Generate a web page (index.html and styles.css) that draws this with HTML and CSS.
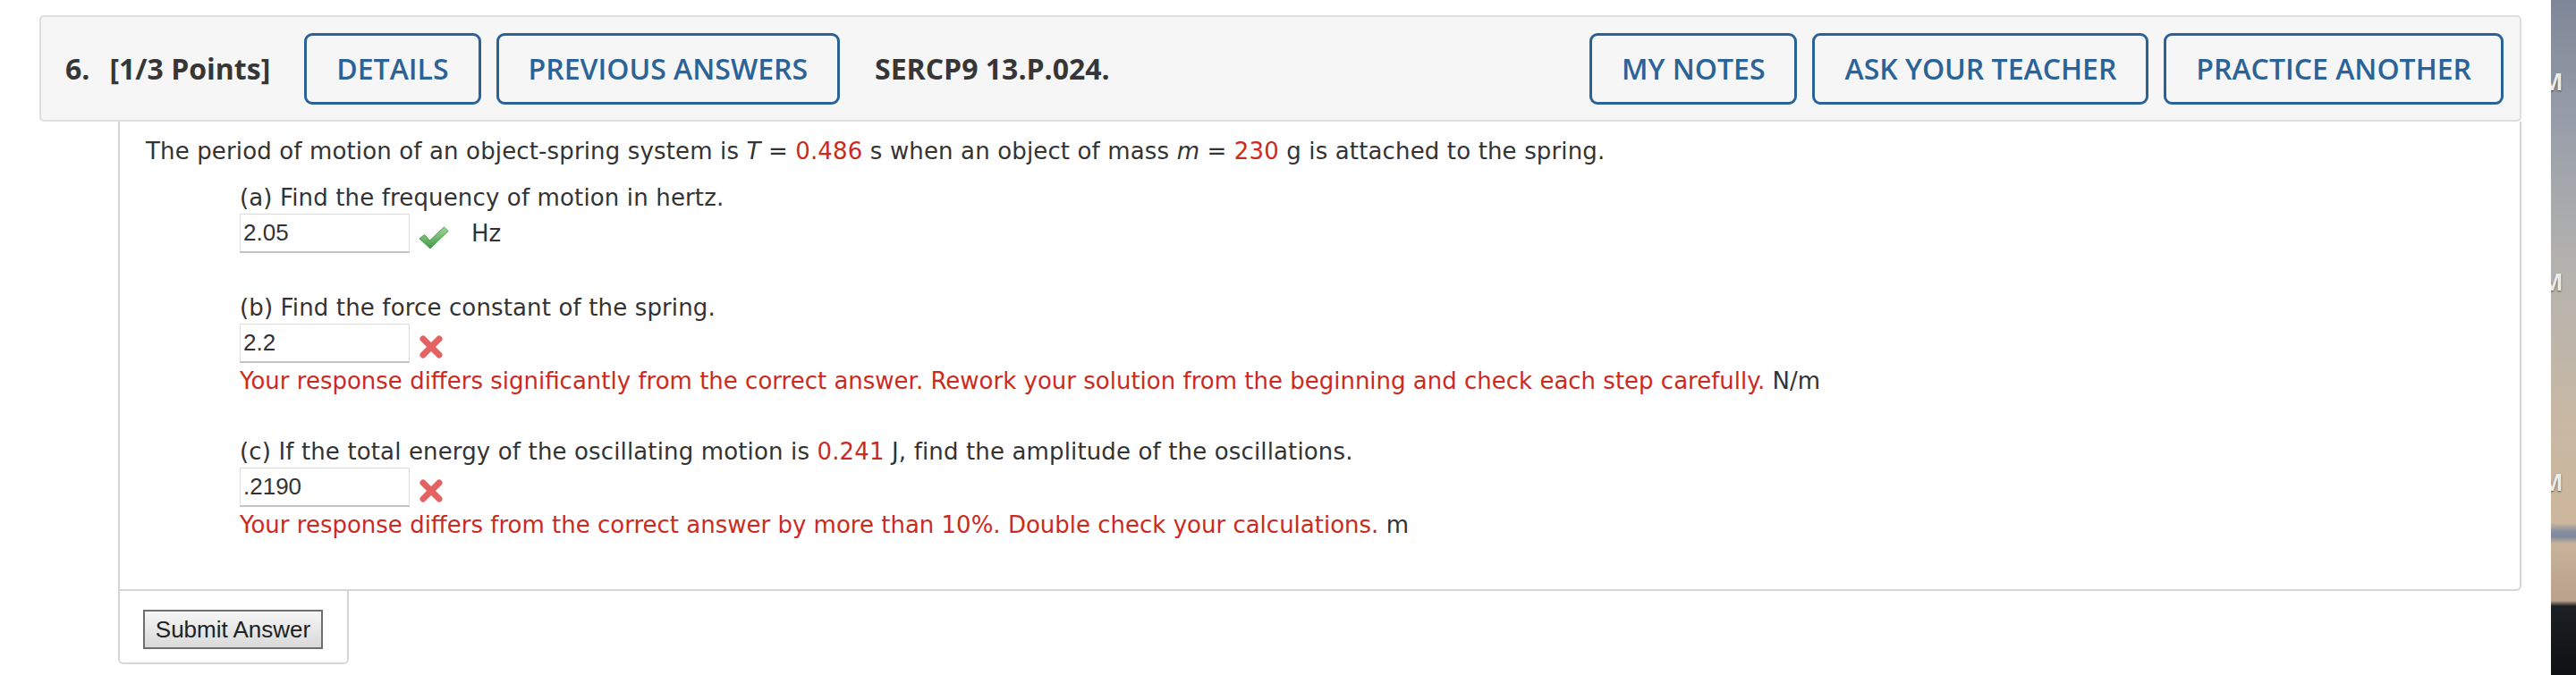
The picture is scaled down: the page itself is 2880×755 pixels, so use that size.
FILE: index.html
```html
<!DOCTYPE html>
<html lang="en">
<head>
<meta charset="utf-8">
<title>Question 6</title>
<link rel="stylesheet" href="styles.css">
</head>
<body>
<div class="page">
  <main class="question">
    <div class="qhead">
      <span class="qnum">6.</span>
      <span class="qpoints">[1/3 Points]</span>
      <button class="hbtn">DETAILS</button>
      <button class="hbtn hbtn-last">PREVIOUS ANSWERS</button>
      <span class="qcode">SERCP9 13.P.024.</span>
      <span class="spacer"></span>
      <button class="hbtn">MY NOTES</button>
      <button class="hbtn">ASK YOUR TEACHER</button>
      <button class="hbtn">PRACTICE ANOTHER</button>
    </div>
    <div class="qbody">
      <p class="stem">The period of motion of an object-spring system is <i>T</i> = <span class="red">0.486</span> s when an object of mass <i>m</i> = <span class="red">230</span> g is attached to the spring.</p>
      <div class="parts">
        <div class="part">
          <div class="prompt">(a) Find the frequency of motion in hertz.</div>
          <div class="answer">
            <input class="ans" type="text" value="2.05" readonly>
            <svg class="icon icon-check" width="36" height="28" viewBox="0 0 36 28" aria-hidden="true">
              <defs>
                <linearGradient id="gck" x1="0" y1="0" x2="0" y2="1">
                  <stop offset="0" stop-color="#9fd89a"/>
                  <stop offset="1" stop-color="#3f9a43"/>
                </linearGradient>
              </defs>
              <path d="M2 15 L7.5 10.5 L13.5 17 L29.5 2 L34 6.5 L14 26 Z" fill="url(#gck)" stroke="#4a9b4a" stroke-width="1" stroke-linejoin="round"/>
            </svg>
            <span class="unit">Hz</span>
          </div>
        </div>
        <div class="part">
          <div class="prompt">(b) Find the force constant of the spring.</div>
          <div class="answer">
            <input class="ans" type="text" value="2.2" readonly>
            <svg class="icon icon-x" width="30" height="26" viewBox="0 0 30 26" aria-hidden="true">
              <path d="M6 4 L24 22 M24 4 L6 22" stroke="#e46262" stroke-width="7" stroke-linecap="round"/>
            </svg>
          </div>
          <div class="feedback"><span class="red">Your response differs significantly from the correct answer. Rework your solution from the beginning and check each step carefully.</span> N/m</div>
        </div>
        <div class="part">
          <div class="prompt">(c) If the total energy of the oscillating motion is <span class="red">0.241</span> J, find the amplitude of the oscillations.</div>
          <div class="answer">
            <input class="ans" type="text" value=".2190" readonly>
            <svg class="icon icon-x" width="30" height="26" viewBox="0 0 30 26" aria-hidden="true">
              <path d="M6 4 L24 22 M24 4 L6 22" stroke="#e46262" stroke-width="7" stroke-linecap="round"/>
            </svg>
          </div>
          <div class="feedback"><span class="red">Your response differs from the correct answer by more than 10%. Double check your calculations.</span> m</div>
        </div>
      </div>
    </div>
    <div class="submit-box">
      <button class="submit">Submit Answer</button>
    </div>
  </main>
  <aside class="wallpaper">
    <span class="wp-label">M</span>
    <span class="wp-label">M</span>
    <span class="wp-label">M</span>
  </aside>
</div>
</body>
</html>
```

FILE: styles.css
```css
* {
  box-sizing: border-box;
}

html,
body {
  margin: 0;
  padding: 0;
  background: #ffffff;
}

body {
  font-family: "DejaVu Sans", Verdana, sans-serif;
  color: #333333;
}

.page {
  display: flex;
  height: 755px;
  overflow: hidden;
}

.question {
  flex: 1;
  margin: 17px 33px 0 44px;
}

/* Header bar */
.qhead {
  display: flex;
  align-items: center;
  height: 119px;
  padding: 0 18px 0 27px;
  background: #f6f6f6;
  border: 2px solid #dedede;
  border-radius: 5px;
  font-family: "Open Sans", sans-serif;
  font-size: 32px;
  font-weight: 700;
  color: #363636;
}

.qnum {
  margin-right: 22px;
}

.qpoints {
  margin-right: 38px;
}

.spacer {
  flex: 1;
}

.hbtn {
  display: inline-flex;
  align-items: center;
  height: 80px;
  padding: 0 33px;
  background: transparent;
  border: 3px solid #2c6397;
  border-radius: 9px;
  color: #2c6397;
  font-family: "Open Sans", sans-serif;
  font-size: 32px;
  font-weight: 600;
  cursor: pointer;
}

.hbtn + .hbtn {
  margin-left: 17px;
}

.hbtn-last {
  margin-right: 39px;
}

/* Question body */
.qbody {
  margin-left: 88px;
  border: 2px solid #d6d6d6;
  border-top: 0;
  border-bottom-right-radius: 6px;
  padding: 15px 0 54px 29px;
  font-size: 26px;
  line-height: 36px;
}

.stem {
  margin: 0;
  letter-spacing: 0.14px;
}

.prompt {
  letter-spacing: 0.14px;
}

.red {
  color: #cc2a1e;
}

.parts {
  margin: 16px 0 0 105px;
}

.part + .part {
  margin-top: 43px;
}

.answer {
  display: flex;
  align-items: center;
  height: 44px;
}

.ans {
  width: 190px;
  height: 44px;
  margin: 0;
  padding: 0 3px;
  border: 1px solid #dcdcdc;
  border-bottom: 2px solid #c2c2c2;
  background: #ffffff;
  font-family: "Liberation Sans", Arial, sans-serif;
  font-size: 26px;
  color: #333333;
  outline: none;
}

.icon {
  display: block;
  margin-left: 9px;
  margin-top: 10px;
}

.icon-x {
  margin-top: 8px;
}

.unit {
  margin-left: 24px;
}

.feedback {
  margin-top: 2px;
}

/* Submit */
.submit-box {
  width: 258px;
  height: 82px;
  margin-left: 88px;
  padding: 21px 0 0 26px;
  border: 2px solid #d6d6d6;
  border-top: 0;
  border-radius: 0 0 6px 6px;
}

.submit {
  width: 201px;
  height: 44px;
  padding: 0;
  border: 2px solid #6e6e6e;
  background: linear-gradient(#f6f6f6, #d9d9d9);
  font-family: "Liberation Sans", Arial, sans-serif;
  font-size: 26px;
  color: #222222;
}

/* Desktop wallpaper strip at the right edge */
.wallpaper {
  width: 28px;
  flex: none;
  display: flex;
  flex-direction: column;
  gap: 200px;
  padding-top: 79px;
  overflow: hidden;
  background: linear-gradient(180deg,
    #7e8797 0px,
    #9aa0aa 150px,
    #b4b2ae 300px,
    #c6b8a5 450px,
    #cdb69c 585px,
    #8791a0 594px,
    #7c879a 600px,
    #c9b29a 608px,
    #b9a18c 672px,
    #1c1f23 678px,
    #0f1114 755px);
}

.wp-label {
  display: block;
  height: 24px;
  margin-left: -11px;
  font-family: "Open Sans", sans-serif;
  font-weight: 700;
  font-size: 26px;
  line-height: 24px;
  color: #ececec;
  text-shadow: 0 1px 2px rgba(0, 0, 0, 0.6);
}
```
